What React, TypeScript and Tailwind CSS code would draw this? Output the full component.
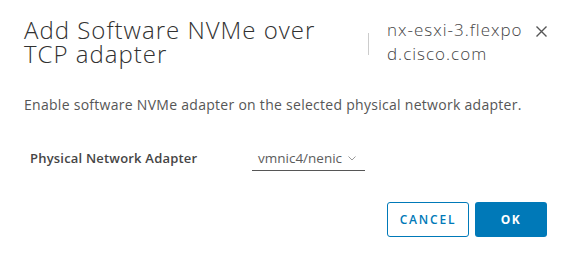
export default function App() {
  return (
    <div className="h-[259px] w-[566px] bg-white pl-[24px] pr-[19px] pt-[18px] font-['Open_Sans',sans-serif] text-[#565656]">
      {/* Header */}
      <div className="flex items-start">
        <h1 className="w-[310px] text-[24px] font-light leading-[24px] tracking-[1px] text-[#313131]">
          Add Software NVMe over TCP adapter
        </h1>
        <div className="ml-[34px] mt-[15px] h-[22px] w-px bg-[#cccccc]" />
        <div className="ml-[18px] text-[17px] font-light leading-[24px] tracking-[1px] text-[#454545]">
          <div>nx-esxi-3.flexpo</div>
          <div>d.cisco.com</div>
        </div>
        <button className="ml-auto mt-[8px] text-[#555]" aria-label="Close">
          <svg width="11" height="11" viewBox="0 0 11 11" fill="none" stroke="currentColor" strokeWidth="1.4">
            <path d="M0.5 0.5 L10.5 10.5 M10.5 0.5 L0.5 10.5" />
          </svg>
        </button>
      </div>

      {/* Body */}
      <p className="mt-[29px] text-[14px] leading-[20px] tracking-[0.28px] text-[#565656]">
        Enable software NVMe adapter on the selected physical network adapter.
      </p>

      <div className="mt-[33px] flex items-start">
        <label className="w-[228px] pl-[6px] text-[13px] font-semibold leading-[20px] tracking-[0.2px] text-[#454545]">
          Physical Network Adapter
        </label>
        <div className="flex w-[113px] items-center border-b border-[#565656] pb-[2px] pl-[6px]">
          <span className="text-[13.5px] leading-[20px] text-[#5c5c5c]">vmnic4/nenic</span>
          <svg width="8" height="5" viewBox="0 0 8 5" fill="none" stroke="#9a9a9a" strokeWidth="1" className="ml-auto mr-[9px]">
            <path d="M0.5 0.5 L4 4 L7.5 0.5" />
          </svg>
        </div>
      </div>

      {/* Footer */}
      <div className="mt-[31px] flex justify-end gap-[6px]">
        <button className="h-[35px] w-[82px] rounded-[3px] border border-[#0079b8] text-[12px] font-semibold tracking-[1.8px] text-[#0079b8]">
          CANCEL
        </button>
        <button className="h-[35px] w-[72px] rounded-[3px] bg-[#0079b8] text-[12px] font-bold tracking-[1.5px] text-white">
          OK
        </button>
      </div>
    </div>
  );
}
